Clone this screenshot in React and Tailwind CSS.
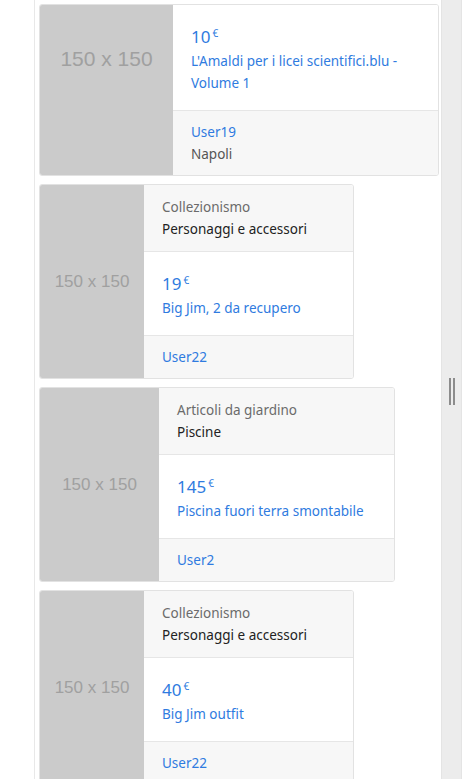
const items = [
  {
    width: 'w-[400px]',
    img: 'w-[133px]',
    imgText: 'text-[21px] pt-[38px] items-start',
    price: '10',
    title: "L'Amaldi per i licei scientifici.blu - Volume 1",
    user: 'User19',
    city: 'Napoli',
  },
  {
    width: 'w-[315px]',
    img: 'w-[104px]',
    imgText: 'text-[17px] items-center',
    category: 'Collezionismo',
    sub: 'Personaggi e accessori',
    price: '19',
    title: 'Big Jim, 2 da recupero',
    user: 'User22',
  },
  {
    width: 'w-[356px]',
    img: 'w-[119px]',
    imgText: 'text-[17px] items-center',
    category: 'Articoli da giardino',
    sub: 'Piscine',
    price: '145',
    title: 'Piscina fuori terra smontabile',
    user: 'User2',
  },
  {
    width: 'w-[315px]',
    img: 'w-[104px]',
    imgText: 'text-[17px] items-center',
    category: 'Collezionismo',
    sub: 'Personaggi e accessori',
    price: '40',
    title: 'Big Jim outfit',
    user: 'User22',
  },
];

function Card({ item }) {
  return (
    <div className={`${item.width} flex shrink-0 border border-[#e2e2e2] rounded-[3px] overflow-hidden`}>
      <div
        className={`${item.img} ${item.imgText} shrink-0 bg-[#cbcbcb] flex justify-center text-[#a0a0a0] font-['Liberation_Sans',Arial,sans-serif]`}
      >
        150 x 150
      </div>
      <div className="flex-1 flex flex-col text-[13.5px] leading-[22px]">
        {item.category && (
          <div className="bg-[#f7f7f7] border-b border-[#e6e6e6] px-[18px] py-[11px]">
            <div className="text-[#6b6b6b]">{item.category}</div>
            <div className="text-[#222]">{item.sub}</div>
          </div>
        )}
        <div className="bg-white px-[18px] pt-[19px] pb-[16px]">
          <div className="text-[#2f7be0] text-[17px] leading-[26px]">
            {item.price}
            <sup className="text-[10px] ml-[2px] -top-[6px]">€</sup>
          </div>
          <div className="text-[#2f7be0]">{item.title}</div>
        </div>
        <div className="bg-[#f7f7f7] border-t border-[#e6e6e6] px-[18px] py-[10px]">
          <div className="text-[#2f7be0]">{item.user}</div>
          {item.city && <div className="text-[#555]">{item.city}</div>}
        </div>
      </div>
    </div>
  );
}

export default function App() {
  return (
    <div className="w-[474px] h-[779px] overflow-hidden bg-white flex font-['Noto_Sans',sans-serif]">
      <div className="w-[34px] shrink-0" />
      <div className="w-[407px] shrink-0 border-l border-[#e8e8e8] pl-[4px] pt-[4px] flex flex-col items-start gap-[8px]">
        {items.map((item, i) => (
          <Card key={i} item={item} />
        ))}
      </div>
      <div className="w-[21px] shrink-0 bg-[#ececec] border-x border-[#e4e4e4] flex flex-col">
        <div className="h-[378px]" />
        <div className="h-[27px] flex justify-center gap-[2px]">
          <div className="w-[2px] h-full bg-[#8c8c8c]" />
          <div className="w-[2px] h-full bg-[#8c8c8c]" />
        </div>
      </div>
    </div>
  );
}
